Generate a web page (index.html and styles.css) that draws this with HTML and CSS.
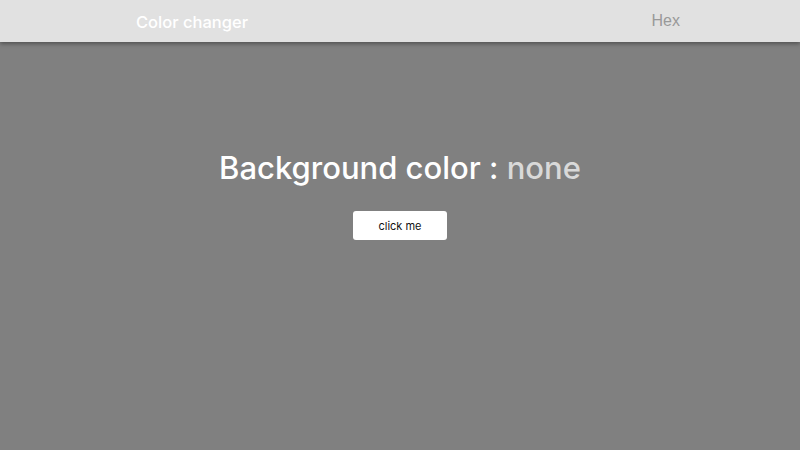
FILE: index.html
```html
<!DOCTYPE html>
<html lang="en">

<head>
    <meta charset="UTF-8">
    <meta name="viewport" content="width=device-width, initial-scale=1.0">
    <title>Color changer</title>
    <link rel="stylesheet" href="styles.css">
</head>

<body>
    <nav class="navbar">
        <div class="nav-inner">
            <span class="brand">Color changer</span>
            <span class="nav-link">Hex</span>
        </div>
    </nav>

    <main class="main">
        <h1 class="title">Background color : <span class="color-name">none</span></h1>
        <button class="btn">click me</button>
    </main>
</body>

</html>
```

FILE: styles.css
```css
* {
    box-sizing: border-box;
}

body {
    margin: 0;
    height: 450px;
    background-color: #808080;
    font-family: Inter, "Open Sans", sans-serif;
    overflow: hidden;
}

.navbar {
    height: 42px;
    background-color: #e1e1e1;
    box-shadow: 0 2px 4px rgba(0, 0, 0, 0.35);
}

.nav-inner {
    height: 100%;
    display: flex;
    align-items: center;
    justify-content: space-between;
    padding: 0 120px 0 136px;
}

.brand {
    color: #fff;
    font-size: 16.5px;
    font-weight: 500;
    padding-top: 2px;
}

.nav-link {
    color: #999;
    font-family: "Liberation Sans", Arial, sans-serif;
    font-size: 16px;
    padding-bottom: 1px;
}

.main {
    display: flex;
    flex-direction: column;
    align-items: center;
    padding-top: 103px;
}

.title {
    margin: 0;
    color: #fff;
    font-size: 31px;
    font-weight: 500;
    line-height: 46px;
}

.color-name {
    color: #d9d9d9;
}

.btn {
    margin-top: 20px;
    width: 94px;
    height: 29px;
    border: none;
    border-radius: 3px;
    background-color: #fff;
    color: #111;
    font-family: inherit;
    font-size: 11px;
    cursor: pointer;
}
```
